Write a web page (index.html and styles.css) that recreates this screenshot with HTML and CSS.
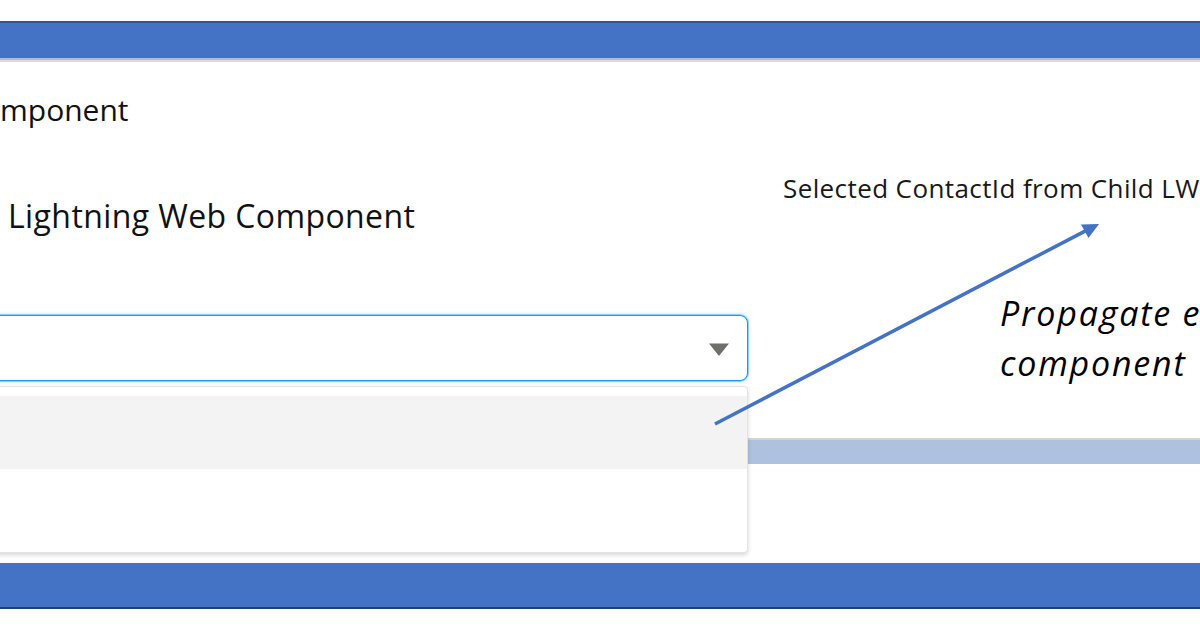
FILE: index.html
```html
<!DOCTYPE html>
<html lang="en">
<head>
<meta charset="utf-8">
<title>Child to Parent LWC</title>
<link rel="stylesheet" href="styles.css">
</head>
<body>
<div class="page">
  <div class="band band-top"></div>
  <div class="card">
    <div class="col-left">
      <div class="title">mponent</div>
      <div class="label">Lightning Web Component</div>
      <div class="combo">
        <div class="input">
          <svg class="caret" width="22" height="13" viewBox="0 0 22 13"><path d="M1 0.5 L21 0.5 L11.6 12.3 Q11 13 10.4 12.3 Z" fill="#706e6b"/></svg>
        </div>
        <div class="listbox">
          <div class="option active"></div>
          <div class="option"></div>
        </div>
      </div>
    </div>
    <div class="col-right">
      <div class="selected">Selected ContactId from Child LW</div>
      <div class="note">Propagate e<br>component</div>
    </div>
  </div>
  <div class="strip"></div>
  <div class="band band-bottom"></div>
  <svg class="arrow" width="1200" height="630" viewBox="0 0 1200 630">
    <line x1="715" y1="424" x2="1086" y2="230.6" stroke="#4472c4" stroke-width="3.5"/>
    <polygon points="1099,224 1088.5,238 1081,224.5" fill="#4472c4"/>
  </svg>
</div>
</body>
</html>
```

FILE: styles.css
```css
* { box-sizing: border-box; }
html, body { margin: 0; padding: 0; background: #ffffff; }
body { width: 1200px; height: 630px; overflow: hidden; font-family: "Open Sans", "Liberation Sans", sans-serif; color: #000; }

.page { position: relative; width: 1200px; height: 630px; padding-top: 21px; overflow: hidden; }

.band { background: #4472c4; }
.band-top {
  height: 39px;
  border-top: 2px solid #2f5597;
  border-bottom: 2px solid #a9bde3;
  box-shadow: 0 2px 0 #dadada;
}

.card { display: flex; height: 376px; margin-top: 2px; background: #fff; }

.col-left { flex: 0 0 748px; display: flex; flex-direction: column; }
.title { margin-top: 28px; font-size: 30px; line-height: 40px; white-space: nowrap; color: #111; }
.label { margin-top: 66px; padding-left: 8px; font-size: 32px; line-height: 40px; letter-spacing: 0.4px; white-space: nowrap; color: #111; }

.combo { position: relative; margin-top: 79px; margin-left: -14px; width: 762px; }
.input {
  height: 66px;
  border: 1px solid #1b96ff;
  border-radius: 8px;
  box-shadow: 0 0 0 1px rgba(27, 150, 255, 0.35), 0 0 4px rgba(27, 150, 255, 0.45);
  display: flex; align-items: center; justify-content: flex-end;
  padding-right: 17px;
  background: #fff;
}
.caret { display: block; margin-top: 2px; }

.listbox {
  position: absolute; left: 0; top: 71px; width: 762px; height: 167px;
  background: #fff;
  border: 1px solid #e3e3e3;
  border-radius: 4px;
  box-shadow: 0 2px 4px rgba(0, 0, 0, 0.16);
  padding-top: 9px;
  z-index: 2;
}
.option { height: 81px; }
.option.active { height: 73px; background: #f3f3f3; }

.col-right { flex: 1; padding-left: 35px; min-width: 0; }
.selected { margin-top: 109px; font-size: 26px; line-height: 34px; letter-spacing: 0.4px; white-space: nowrap; color: #181818; }
.note { margin-top: 83px; margin-left: 217px; font-size: 34px; line-height: 50px; font-style: italic; white-space: nowrap; letter-spacing: 1.8px; color: #000; }

.strip { height: 26px; border-top: 2px solid #d4d4d4; background: #aec2df; }
.band-bottom { margin-top: 99px; height: 46px; border-bottom: 2px solid #1f3f7a; }

.arrow { position: absolute; left: 0; top: 0; z-index: 3; pointer-events: none; }
```
